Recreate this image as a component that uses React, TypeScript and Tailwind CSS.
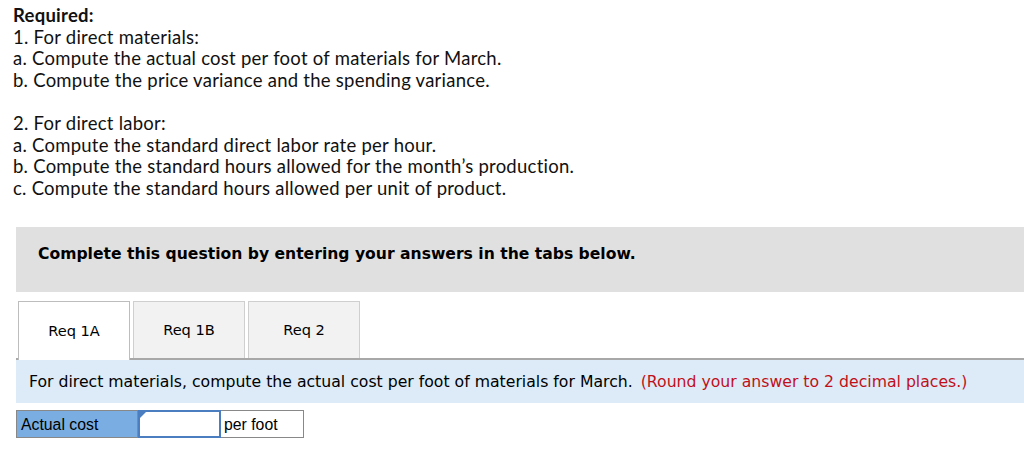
export default function App() {
  return (
    <div className="w-[1024px] h-[449px] bg-white overflow-hidden text-[#111]">
      <div className="pl-[13px] pt-[5px] text-[18.5px] leading-[21.6px] tracking-[0.25px] font-['Lato',sans-serif]">
        <p className="font-bold">Required:</p>
        <p>1. For direct materials:</p>
        <p>a. Compute the actual cost per foot of materials for March.</p>
        <p>b. Compute the price variance and the spending variance.</p>
        <p className="mt-[21.6px]">2. For direct labor:</p>
        <p>a. Compute the standard direct labor rate per hour.</p>
        <p>b. Compute the standard hours allowed for the month’s production.</p>
        <p>c. Compute the standard hours allowed per unit of product.</p>
      </div>

      <div className="ml-[16px] mt-[28px] h-[65px] bg-[#e0e0e0] flex items-center pl-[22px] pb-[10px] font-['DejaVu_Sans',sans-serif] font-bold text-[15.6px] text-black">
        Complete this question by entering your answers in the tabs below.
      </div>

      <div className="ml-[18px] mt-[9px] flex items-end gap-[3px] font-['DejaVu_Sans',sans-serif] text-[14.6px] text-black">
        <div className="w-[112px] h-[59px] bg-white border border-b-0 border-[#bdbdbd] flex items-center justify-center -mb-[2px] relative z-10">
          Req 1A
        </div>
        <div className="w-[112px] h-[57px] bg-[#f2f2f2] border border-b-0 border-[#cfcfcf] flex items-center justify-center">
          Req 1B
        </div>
        <div className="w-[112px] h-[57px] bg-[#f2f2f2] border border-b-0 border-[#cfcfcf] flex items-center justify-center">
          Req 2
        </div>
      </div>
      <div className="ml-[16px] border-t-2 border-[#a8a8a8]">
        <div className="h-[43px] bg-[#dcebf7] flex items-center pl-[13px] font-['DejaVu_Sans',sans-serif] text-[15.7px] text-black">
          For direct materials, compute the actual cost per foot of materials for March.
          <span className="ml-[8px] text-[#c0101a]">(Round your answer to 2 decimal places.)</span>
        </div>
      </div>

      <div className="ml-[16px] mt-[7px] flex h-[28px] font-['Liberation_Sans',sans-serif] text-[15.8px] text-black">
        <div className="w-[122px] bg-[#7aaee3] border border-[#888] flex items-center pl-[4px]">Actual cost</div>
        <div className="w-[83px] bg-white border-2 border-[#4a7ec0] relative">
          <span className="absolute left-0 top-0 w-0 h-0 border-t-[6px] border-r-[6px] border-t-[#4a7ec0] border-r-transparent" />
        </div>
        <div className="w-[83px] bg-white border border-[#888] border-l-0 flex items-center pl-[3px]">per foot</div>
      </div>
    </div>
  );
}
